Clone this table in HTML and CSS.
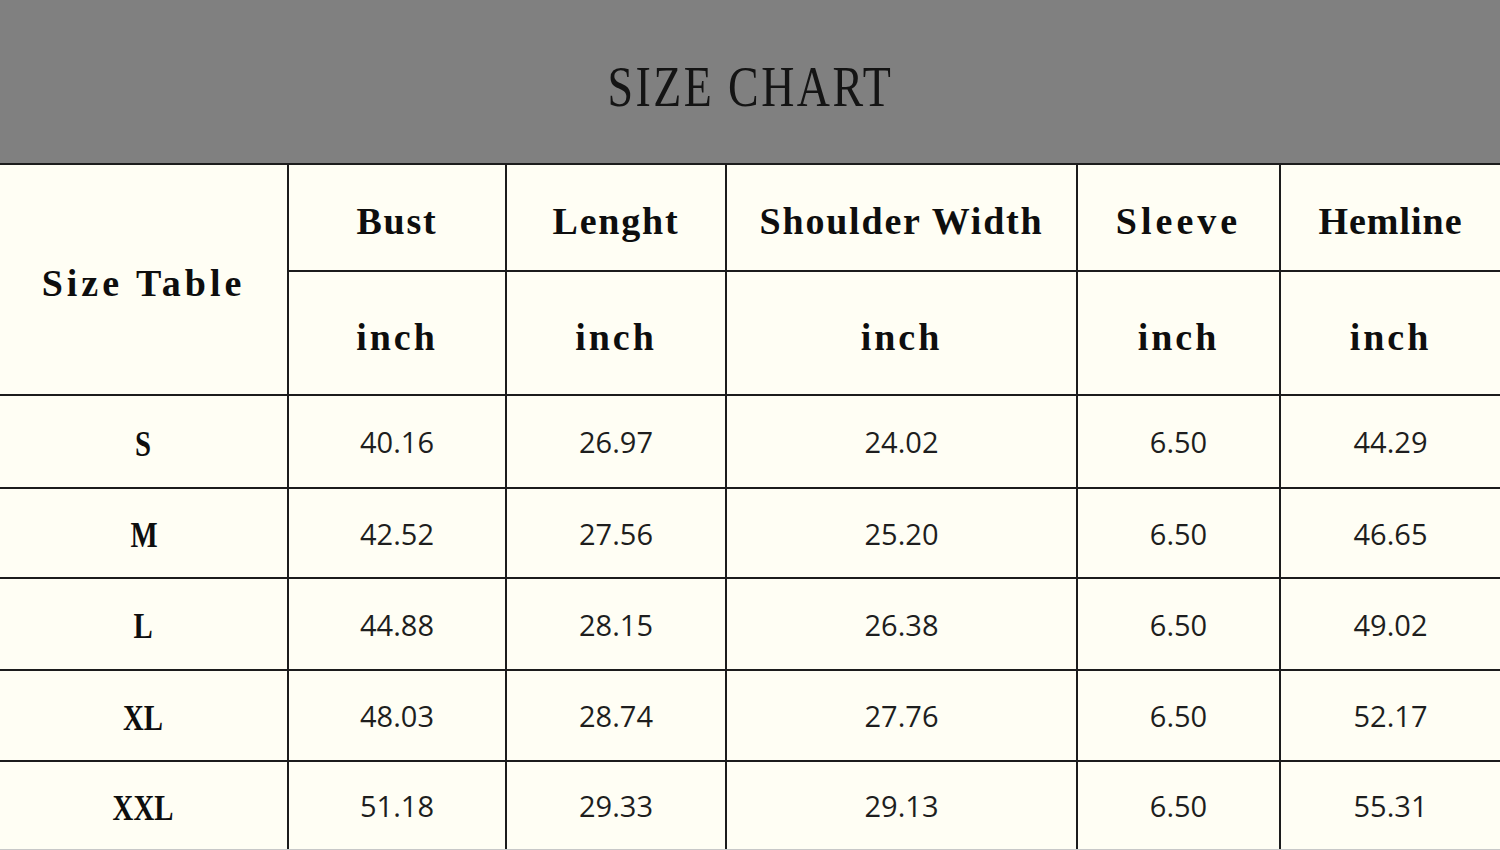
FILE: index.html
```html
<!DOCTYPE html>
<html lang="en">
<head>
<meta charset="utf-8">
<title>Size Chart</title>
<link rel="stylesheet" href="styles.css">
</head>
<body>
<div class="chart">
  <header class="title-bar">
    <h1 class="title"><span class="squeeze">SIZE CHART</span></h1>
  </header>
  <div class="table">
    <div class="cell corner"><span class="lbl sp-4">Size Table</span></div>
    <div class="cell head"><span class="lbl">Bust</span></div>
    <div class="cell head"><span class="lbl">Lenght</span></div>
    <div class="cell head"><span class="lbl">Shoulder Width</span></div>
    <div class="cell head"><span class="lbl sp-4">Sleeve</span></div>
    <div class="cell head"><span class="lbl sp-1">Hemline</span></div>

    <div class="cell head"><span class="lbl sp-3">inch</span></div>
    <div class="cell head"><span class="lbl sp-3">inch</span></div>
    <div class="cell head"><span class="lbl sp-3">inch</span></div>
    <div class="cell head"><span class="lbl sp-3">inch</span></div>
    <div class="cell head"><span class="lbl sp-3">inch</span></div>

    <div class="cell size"><span class="lbl">S</span></div>
    <div class="cell num">40.16</div>
    <div class="cell num">26.97</div>
    <div class="cell num">24.02</div>
    <div class="cell num">6.50</div>
    <div class="cell num">44.29</div>

    <div class="cell size"><span class="lbl">M</span></div>
    <div class="cell num">42.52</div>
    <div class="cell num">27.56</div>
    <div class="cell num">25.20</div>
    <div class="cell num">6.50</div>
    <div class="cell num">46.65</div>

    <div class="cell size"><span class="lbl">L</span></div>
    <div class="cell num">44.88</div>
    <div class="cell num">28.15</div>
    <div class="cell num">26.38</div>
    <div class="cell num">6.50</div>
    <div class="cell num">49.02</div>

    <div class="cell size"><span class="lbl">XL</span></div>
    <div class="cell num">48.03</div>
    <div class="cell num">28.74</div>
    <div class="cell num">27.76</div>
    <div class="cell num">6.50</div>
    <div class="cell num">52.17</div>

    <div class="cell size"><span class="lbl">XXL</span></div>
    <div class="cell num">51.18</div>
    <div class="cell num">29.33</div>
    <div class="cell num">29.13</div>
    <div class="cell num">6.50</div>
    <div class="cell num">55.31</div>
  </div>
</div>
</body>
</html>
```
FILE: styles.css
```css
html, body {
  margin: 0;
  padding: 0;
  background: #fffef4;
}

.chart {
  width: 1500px;
  height: 850px;
  overflow: hidden;
  display: flex;
  flex-direction: column;
}

.title-bar {
  box-sizing: border-box;
  height: 165px;
  padding-top: 10px;
  background: #808080;
  border-bottom: 2px solid #1c1c1c;
  display: flex;
  align-items: center;
  justify-content: center;
}

.title {
  margin: 0;
  font-family: "Liberation Serif", "Times New Roman", serif;
  font-weight: normal;
  font-size: 56px;
  line-height: 1;
  color: #141414;
}

.squeeze {
  display: inline-block;
  white-space: nowrap;
  letter-spacing: 3px;
  transform: scaleX(0.82);
}

.table {
  display: grid;
  grid-template-columns: 287px 216px 218px 349px 201px 219px;
  grid-template-rows: 105px 122px 91px 88px 90px 89px 87px;
  gap: 2px;
  background: #1c1c1c;
  border-bottom: 1px solid #c8c8c8;
}

.cell {
  box-sizing: border-box;
  background: #fffef4;
  display: flex;
  align-items: center;
  justify-content: center;
}

.corner {
  grid-row: 1 / 3;
  padding-top: 7px;
}

.head {
  padding-top: 7px;
}

.size {
  padding-top: 4px;
}

.lbl {
  display: inline-block;
  font-family: "Liberation Serif", "Times New Roman", serif;
  font-weight: bold;
  font-size: 38px;
  line-height: 1;
  letter-spacing: 1.8px;
  color: #0e0e0e;
  white-space: nowrap;
}

.lbl.sp-1 {
  letter-spacing: 1px;
}

.lbl.sp-3 {
  letter-spacing: 3px;
}

.lbl.sp-4 {
  letter-spacing: 4px;
}

.size .lbl {
  font-size: 36px;
  letter-spacing: 0;
  transform: scaleX(0.8);
}

.num {
  font-family: "Open Sans", "Noto Sans", sans-serif;
  font-size: 29px;
  color: #1e1e1e;
}
```
